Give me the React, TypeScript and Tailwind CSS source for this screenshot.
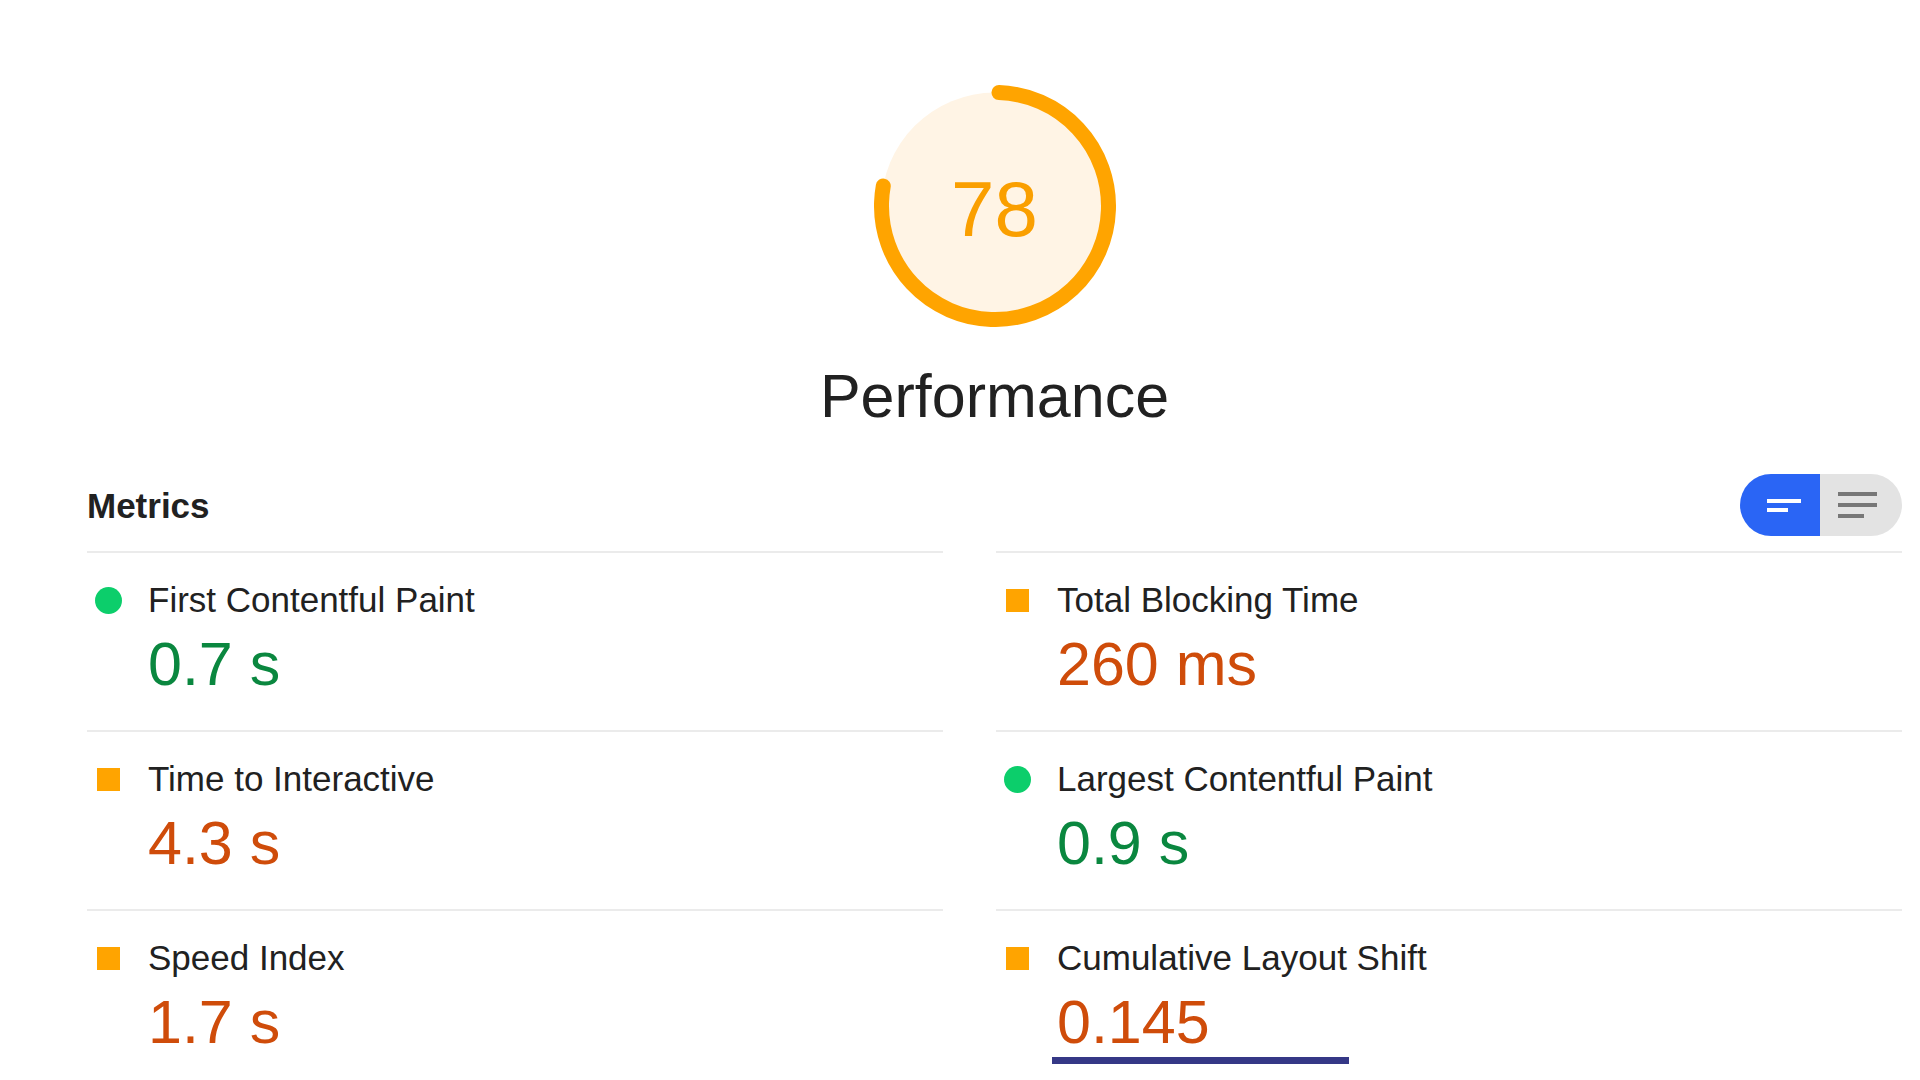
import type { ReactNode } from "react";

type Metric = {
  label: string;
  value: string;
  status: "pass" | "average";
  underline?: boolean;
};

const metrics: Metric[] = [
  { label: "First Contentful Paint", value: "0.7 s", status: "pass" },
  { label: "Total Blocking Time", value: "260 ms", status: "average" },
  { label: "Time to Interactive", value: "4.3 s", status: "average" },
  { label: "Largest Contentful Paint", value: "0.9 s", status: "pass" },
  { label: "Speed Index", value: "1.7 s", status: "average" },
  { label: "Cumulative Layout Shift", value: "0.145", status: "average", underline: true },
];

const R = 113.5;
const C = 2 * Math.PI * R;

function Gauge({ score }: { score: number }) {
  const arc = C * 0.772;
  return (
    <div className="relative w-[242px] h-[242px] flex items-center justify-center">
      <svg width="242" height="242" viewBox="0 0 242 242" className="absolute inset-0">
        <circle cx="121" cy="121" r={R} fill="#fff4e5" />
        <circle
          cx="121"
          cy="121"
          r={R}
          fill="none"
          stroke="#ffa400"
          strokeWidth="15"
          strokeLinecap="round"
          strokeDasharray={`${arc} ${C}`}
          transform="rotate(-88 121 121)"
        />
      </svg>
      <span className="relative pt-[6px] text-[78px] leading-none text-[#fa9f00]">{score}</span>
    </div>
  );
}

function StatusIcon({ status }: { status: Metric["status"] }) {
  return (
    <span className="w-[27px] h-[27px] flex items-center justify-center shrink-0">
      {status === "pass" ? (
        <span className="w-[27px] h-[27px] rounded-full bg-[#0cce6b]" />
      ) : (
        <span className="w-[23px] h-[23px] bg-[#ffa400]" />
      )}
    </span>
  );
}

function MetricCell({ metric }: { metric: Metric }) {
  const valueColor = metric.status === "pass" ? "text-[#0a873f]" : "text-[#cf4c0a]";
  return (
    <div className="border-t-2 border-[#ebebeb] pt-[27px] pb-[36px] relative">
      <div className="flex items-center pl-[8px] gap-[26px]">
        <StatusIcon status={metric.status} />
        <span className="text-[35px] leading-[40px] text-[#212121]">{metric.label}</span>
      </div>
      <div className={`pl-[61px] mt-[14px] text-[61px] leading-[60px] ${valueColor}`}>
        {metric.value}
      </div>
      {metric.underline && (
        <div className="absolute left-[56px] bottom-[24px] w-[297px] h-[7px] bg-[#353886]" />
      )}
    </div>
  );
}

function ToggleButton({ active, children }: { active?: boolean; children: ReactNode }) {
  return (
    <button
      type="button"
      className={`h-full flex items-center ${
        active ? "w-[80px] bg-[#2a65f5] pl-[27px]" : "w-[82px] bg-[#e3e3e3] pl-[18px]"
      }`}
    >
      {children}
    </button>
  );
}

export default function App() {
  return (
    <div
      className="min-h-[1080px] bg-white pt-[85px] pl-[87px] pr-[18px] overflow-hidden"
      style={{ fontFamily: '"Liberation Sans", Arial, sans-serif' }}
    >
      <div className="flex flex-col items-center">
        <Gauge score={78} />
        <h1 className="mt-[39px] text-[61px] leading-[60px] text-[#212121]">Performance</h1>
      </div>

      <div className="mt-[48px] h-[62px] flex items-center justify-between mb-[15px]">
        <h2 className="pt-[2px] text-[35px] leading-[40px] font-bold text-[#212121]">Metrics</h2>
        <div className="h-[62px] flex rounded-full overflow-hidden">
          <ToggleButton active>
            <svg width="34" height="13" viewBox="0 0 34 13">
              <rect x="0" y="0" width="34" height="4" fill="#fff" />
              <rect x="0" y="9" width="21" height="4" fill="#fff" />
            </svg>
          </ToggleButton>
          <ToggleButton>
            <svg width="39" height="26" viewBox="0 0 39 26">
              <rect x="0" y="0" width="39" height="4" fill="#777" />
              <rect x="0" y="11" width="39" height="4" fill="#777" />
              <rect x="0" y="22" width="26" height="4" fill="#777" />
            </svg>
          </ToggleButton>
        </div>
      </div>

      <div className="grid grid-cols-[856px_906px] gap-x-[53px]">
        {metrics.map((m) => (
          <MetricCell key={m.label} metric={m} />
        ))}
      </div>
    </div>
  );
}
